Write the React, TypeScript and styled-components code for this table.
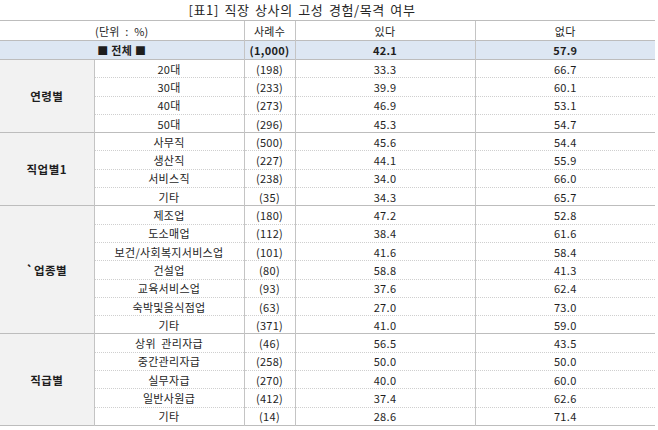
import styled, { createGlobalStyle } from "styled-components";

const GlobalStyle = createGlobalStyle`
  html, body {
    margin: 0;
    padding: 0;
    background: #ffffff;
  }
  body {
    font-family: "Noto Sans CJK KR", "Noto Sans", sans-serif;
    color: #1e1e1e;
  }
`;

const Wrapper = styled.div`
  width: 658px;
  height: 430px;
  overflow: hidden;
`;

const Title = styled.div`
  height: 20px;
  line-height: 20px;
  text-align: center;
  font-size: 13px;
  color: #262626;
  letter-spacing: 0.6px;
  word-spacing: 2px;
  padding-right: 54px;
`;

const Table = styled.table`
  width: 655px;
  border-collapse: collapse;
  table-layout: fixed;
  font-size: 11px;
`;

const Row = styled.tr<{ $h?: number }>`
  height: ${(p) => p.$h ?? 18.3}px;
`;

const Cell = styled.td<{
  $bold?: boolean;
  $top?: "solid" | "dotted";
  $left?: boolean;
  $bg?: string;
}>`
  padding: 1px 0 0;
  text-align: center;
  vertical-align: middle;
  line-height: 1;
  letter-spacing: 0.3px;
  font-weight: ${(p) => (p.$bold ? 700 : 400)};
  background: ${(p) => p.$bg ?? "transparent"};
  border-top: ${(p) =>
    p.$top === "solid"
      ? "1px solid #bdbdbd"
      : p.$top === "dotted"
      ? "1px dotted #cfcfcf"
      : "none"};
  border-left: ${(p) => (p.$left ? "1px solid #c4c4c4" : "none")};
  white-space: pre;
`;

const GroupCell = styled.td`
  padding: 0;
  text-align: center;
  vertical-align: middle;
  font-weight: 700;
  font-size: 11.5px;
  background: #f2f2f2;
  border-top: 1px solid #bdbdbd;
  letter-spacing: 0.5px;
`;

const BottomLine = styled.tr`
  height: 0;
  td {
    border-top: 1px solid #bdbdbd;
    padding: 0;
  }
`;

type Item = [string, string, string, string];

const groups: { name: string; items: Item[] }[] = [
  {
    name: "연령별",
    items: [
      ["20대", "(198)", "33.3", "66.7"],
      ["30대", "(233)", "39.9", "60.1"],
      ["40대", "(273)", "46.9", "53.1"],
      ["50대", "(296)", "45.3", "54.7"],
    ],
  },
  {
    name: "직업별1",
    items: [
      ["사무직", "(500)", "45.6", "54.4"],
      ["생산직", "(227)", "44.1", "55.9"],
      ["서비스직", "(238)", "34.0", "66.0"],
      ["기타", "(35)", "34.3", "65.7"],
    ],
  },
  {
    name: "`업종별",
    items: [
      ["제조업", "(180)", "47.2", "52.8"],
      ["도소매업", "(112)", "38.4", "61.6"],
      ["보건/사회복지서비스업", "(101)", "41.6", "58.4"],
      ["건설업", "(80)", "58.8", "41.3"],
      ["교육서비스업", "(93)", "37.6", "62.4"],
      ["숙박및음식점업", "(63)", "27.0", "73.0"],
      ["기타", "(371)", "41.0", "59.0"],
    ],
  },
  {
    name: "직급별",
    items: [
      ["상위  관리자급", "(46)", "56.5", "43.5"],
      ["중간관리자급", "(258)", "50.0", "50.0"],
      ["실무자급", "(270)", "40.0", "60.0"],
      ["일반사원급", "(412)", "37.4", "62.6"],
      ["기타", "(14)", "28.6", "71.4"],
    ],
  },
];

const TOTAL_BG = "#dde7f3";

export default function App() {
  return (
    <Wrapper>
      <GlobalStyle />
      <Title>[표1] 직장 상사의 고성 경험/목격 여부</Title>
      <Table>
        <colgroup>
          <col style={{ width: 94 }} />
          <col style={{ width: 150 }} />
          <col style={{ width: 51 }} />
          <col style={{ width: 180 }} />
          <col style={{ width: 180 }} />
        </colgroup>
        <tbody>
          <Row $h={20}>
            <Cell colSpan={2} $top="solid">
              {"(단위  :  %)"}
            </Cell>
            <Cell $top="solid" $left>
              사례수
            </Cell>
            <Cell $top="solid" $left>
              있다
            </Cell>
            <Cell $top="solid" $left>
              없다
            </Cell>
          </Row>
          <Row $h={19}>
            <Cell colSpan={2} $top="solid" $bold $bg={TOTAL_BG}>
              ■ 전체 ■
            </Cell>
            <Cell $top="solid" $left $bold $bg={TOTAL_BG}>
              (1,000)
            </Cell>
            <Cell $top="solid" $left $bold $bg={TOTAL_BG}>
              42.1
            </Cell>
            <Cell $top="solid" $left $bold $bg={TOTAL_BG}>
              57.9
            </Cell>
          </Row>
          {groups.map((g) =>
            g.items.map((it, i) => {
              const top = i === 0 ? "solid" : "dotted";
              return (
                <Row key={g.name + it[0] + i}>
                  {i === 0 && (
                    <GroupCell rowSpan={g.items.length}>{g.name}</GroupCell>
                  )}
                  <Cell $top={top} $left>
                    {it[0]}
                  </Cell>
                  <Cell $top={top} $left>
                    {it[1]}
                  </Cell>
                  <Cell $top={top} $left>
                    {it[2]}
                  </Cell>
                  <Cell $top={top} $left>
                    {it[3]}
                  </Cell>
                </Row>
              );
            })
          )}
          <BottomLine>
            <td colSpan={5} />
          </BottomLine>
        </tbody>
      </Table>
    </Wrapper>
  );
}
